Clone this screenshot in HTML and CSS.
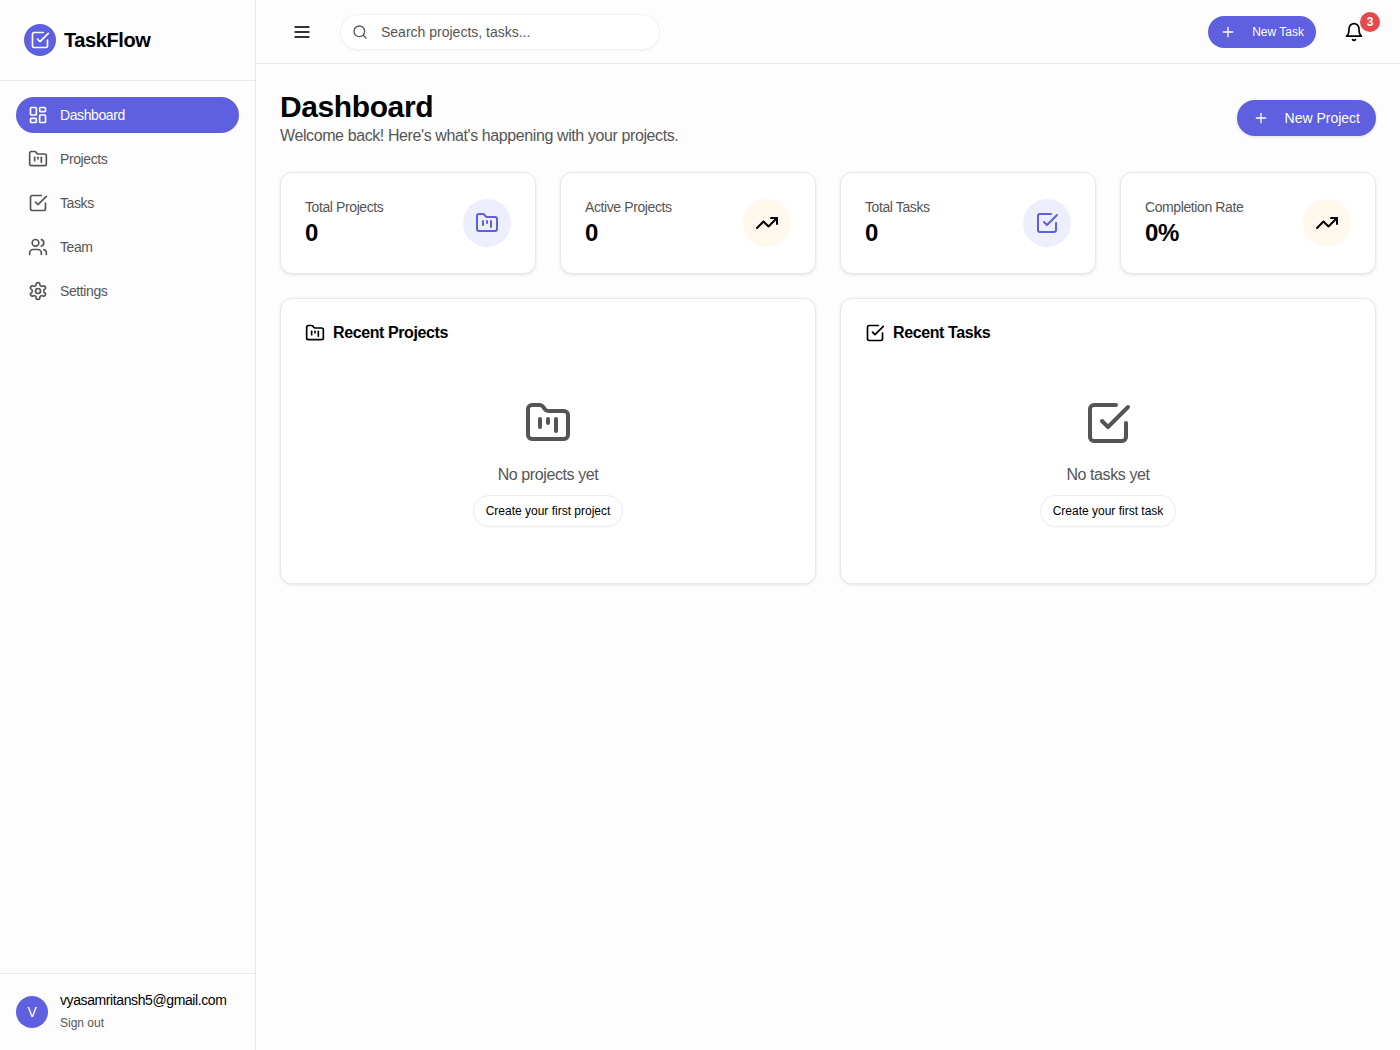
FILE: index.html
```html
<!DOCTYPE html>
<html lang="en">
<head>
  <meta charset="UTF-8"/>
  <title>TaskFlow - Dashboard</title>
  <link rel="stylesheet" href="styles.css">
</head>
<body>

  <!-- ICON SPRITE -->
  <svg class="sprite" xmlns="http://www.w3.org/2000/svg">
    <symbol id="i-dashboard" viewBox="0 0 24 24"><rect x="3" y="3" width="7" height="9" rx="1"/><rect x="14" y="3" width="7" height="5" rx="1"/><rect x="14" y="12" width="7" height="9" rx="1"/><rect x="3" y="16" width="7" height="5" rx="1"/></symbol>
    <symbol id="i-folder" viewBox="0 0 24 24"><path d="M4 20h16a2 2 0 0 0 2-2V8a2 2 0 0 0-2-2h-7.93a2 2 0 0 1-1.66-.9l-.82-1.2A2 2 0 0 0 7.93 3H4a2 2 0 0 0-2 2v13c0 1.1.9 2 2 2Z"/><path d="M8 10v4"/><path d="M12 10v2"/><path d="M16 10v6"/></symbol>
    <symbol id="i-check" viewBox="0 0 24 24"><polyline points="9 11 12 14 22 4"/><path d="M21 12v7a2 2 0 0 1-2 2H5a2 2 0 0 1-2-2V5a2 2 0 0 1 2-2h11"/></symbol>
    <symbol id="i-users" viewBox="0 0 24 24"><path d="M16 21v-2a4 4 0 0 0-4-4H6a4 4 0 0 0-4 4v2"/><circle cx="9" cy="7" r="4"/><path d="M22 21v-2a4 4 0 0 0-3-3.87"/><path d="M16 3.13a4 4 0 0 1 0 7.75"/></symbol>
    <symbol id="i-settings" viewBox="0 0 24 24"><path d="M12.22 2h-.44a2 2 0 0 0-2 2v.18a2 2 0 0 1-1 1.73l-.43.25a2 2 0 0 1-2 0l-.15-.08a2 2 0 0 0-2.73.73l-.22.38a2 2 0 0 0 .73 2.73l.15.1a2 2 0 0 1 1 1.72v.51a2 2 0 0 1-1 1.74l-.15.09a2 2 0 0 0-.73 2.73l.22.38a2 2 0 0 0 2.73.73l.15-.08a2 2 0 0 1 2 0l.43.25a2 2 0 0 1 1 1.73V20a2 2 0 0 0 2 2h.44a2 2 0 0 0 2-2v-.18a2 2 0 0 1 1-1.73l.43-.25a2 2 0 0 1 2 0l.15.08a2 2 0 0 0 2.73-.73l.22-.39a2 2 0 0 0-.73-2.73l-.15-.08a2 2 0 0 1-1-1.74v-.5a2 2 0 0 1 1-1.74l.15-.09a2 2 0 0 0 .73-2.73l-.22-.38a2 2 0 0 0-2.73-.73l-.15.08a2 2 0 0 1-2 0l-.43-.25a2 2 0 0 1-1-1.73V4a2 2 0 0 0-2-2z"/><circle cx="12" cy="12" r="3"/></symbol>
    <symbol id="i-trend" viewBox="0 0 24 24"><polyline points="22 7 13.5 15.5 8.5 10.5 2 17"/><polyline points="16 7 22 7 22 13"/></symbol>
    <symbol id="i-bell" viewBox="0 0 24 24"><path d="M6 8a6 6 0 0 1 12 0c0 7 3 9 3 9H3s3-2 3-9"/><path d="M10.3 21a1.94 1.94 0 0 0 3.4 0"/></symbol>
    <symbol id="i-search" viewBox="0 0 24 24"><circle cx="11" cy="11" r="8"/><path d="m21 21-4.3-4.3"/></symbol>
    <symbol id="i-menu" viewBox="0 0 24 24"><path d="M4 6h16"/><path d="M4 12h16"/><path d="M4 18h16"/></symbol>
    <symbol id="i-plus" viewBox="0 0 24 24"><path d="M5 12h14"/><path d="M12 5v14"/></symbol>
  </svg>

  <div class="app">

    <!-- SIDEBAR -->
    <aside class="sidebar">
      <div class="brand">
        <span class="brand-mark"><svg class="icon icon-20"><use href="#i-check"/></svg></span>
        <span class="brand-name">TaskFlow</span>
      </div>
      <nav class="nav">
        <a class="nav-item active" href="#"><svg class="icon icon-20"><use href="#i-dashboard"/></svg>Dashboard</a>
        <a class="nav-item" href="#"><svg class="icon icon-20"><use href="#i-folder"/></svg>Projects</a>
        <a class="nav-item" href="#"><svg class="icon icon-20"><use href="#i-check"/></svg>Tasks</a>
        <a class="nav-item" href="#"><svg class="icon icon-20"><use href="#i-users"/></svg>Team</a>
        <a class="nav-item" href="#"><svg class="icon icon-20"><use href="#i-settings"/></svg>Settings</a>
      </nav>
      <div class="account">
        <span class="avatar">V</span>
        <div class="account-text">
          <div class="account-email">vyasamritansh5@gmail.com</div>
          <a class="sign-out" href="#">Sign out</a>
        </div>
      </div>
    </aside>

    <div class="content">

      <!-- TOP BAR -->
      <header class="topbar">
        <button class="menu-btn"><svg class="icon icon-20"><use href="#i-menu"/></svg></button>
        <label class="search">
          <svg class="icon icon-16"><use href="#i-search"/></svg>
          <input type="text" placeholder="Search projects, tasks...">
        </label>
        <div class="topbar-actions">
          <button class="btn btn-small"><svg class="icon icon-16"><use href="#i-plus"/></svg>New Task</button>
          <button class="bell">
            <svg class="icon icon-20"><use href="#i-bell"/></svg>
            <span class="badge">3</span>
          </button>
        </div>
      </header>

      <!-- PAGE -->
      <main class="page">
        <div class="page-head">
          <div class="page-title">
            <h1>Dashboard</h1>
            <p>Welcome back! Here's what's happening with your projects.</p>
          </div>
          <button class="btn btn-large"><svg class="icon icon-16"><use href="#i-plus"/></svg>New Project</button>
        </div>

        <div class="stats">
          <div class="card stat">
            <div><div class="stat-label">Total Projects</div><div class="stat-value">0</div></div>
            <span class="stat-icon indigo"><svg class="icon icon-24"><use href="#i-folder"/></svg></span>
          </div>
          <div class="card stat">
            <div><div class="stat-label">Active Projects</div><div class="stat-value">0</div></div>
            <span class="stat-icon amber"><svg class="icon icon-24"><use href="#i-trend"/></svg></span>
          </div>
          <div class="card stat">
            <div><div class="stat-label">Total Tasks</div><div class="stat-value">0</div></div>
            <span class="stat-icon indigo"><svg class="icon icon-24"><use href="#i-check"/></svg></span>
          </div>
          <div class="card stat">
            <div><div class="stat-label">Completion Rate</div><div class="stat-value">0%</div></div>
            <span class="stat-icon amber"><svg class="icon icon-24"><use href="#i-trend"/></svg></span>
          </div>
        </div>

        <div class="panels">
          <section class="card panel">
            <h2><svg class="icon icon-20"><use href="#i-folder"/></svg>Recent Projects</h2>
            <div class="empty">
              <svg class="icon icon-48"><use href="#i-folder"/></svg>
              <p>No projects yet</p>
              <button class="btn-outline">Create your first project</button>
            </div>
          </section>
          <section class="card panel">
            <h2><svg class="icon icon-20"><use href="#i-check"/></svg>Recent Tasks</h2>
            <div class="empty">
              <svg class="icon icon-48"><use href="#i-check"/></svg>
              <p>No tasks yet</p>
              <button class="btn-outline">Create your first task</button>
            </div>
          </section>
        </div>
      </main>
    </div>
  </div>

</body>
</html>
```

FILE: styles.css
```css
/* GLOBAL STYLES */
* {
  margin: 0;
  padding: 0;
  box-sizing: border-box;
}
body {
  font-family: "Liberation Sans", Arial, sans-serif;
  color: #000;
  background: #fdfdfe;
  letter-spacing: -0.025em;
}
button, input {
  font-family: inherit;
  letter-spacing: inherit;
}
a {
  text-decoration: none;
  color: inherit;
}
.sprite {
  display: none;
}
.icon {
  display: block;
  flex: none;
  fill: none;
  stroke: currentColor;
  stroke-width: 2;
  stroke-linecap: round;
  stroke-linejoin: round;
}
.icon-16 { width: 16px; height: 16px; }
.icon-20 { width: 20px; height: 20px; }
.icon-24 { width: 24px; height: 24px; }
.icon-48 { width: 48px; height: 48px; }

.app {
  display: flex;
  height: 1050px;
}

/* SIDEBAR */
.sidebar {
  width: 256px;
  flex: none;
  display: flex;
  flex-direction: column;
  border-right: 1px solid #e8e8ec;
}
.brand {
  height: 81px;
  display: flex;
  align-items: center;
  gap: 8px;
  padding: 0 24px;
  border-bottom: 1px solid #e8e8ec;
}
.brand-mark {
  width: 32px;
  height: 32px;
  border-radius: 50%;
  background: #5e60e0;
  color: #fff;
  display: flex;
  align-items: center;
  justify-content: center;
}
.brand-name {
  font-size: 20px;
  font-weight: 700;
}
.nav {
  flex: 1;
  display: flex;
  flex-direction: column;
  gap: 8px;
  padding: 16px;
}
.nav-item {
  height: 36px;
  display: flex;
  align-items: center;
  gap: 12px;
  padding: 0 12px;
  border-radius: 18px;
  font-size: 14px;
  color: #555;
}
.nav-item.active {
  background: #5e60e0;
  color: #fff;
}
.account {
  height: 77px;
  display: flex;
  align-items: center;
  gap: 12px;
  padding: 0 16px;
  border-top: 1px solid #e8e8ec;
}
.avatar {
  width: 32px;
  height: 32px;
  border-radius: 50%;
  background: #5e60e0;
  color: #fff;
  font-size: 14px;
  display: flex;
  align-items: center;
  justify-content: center;
}
.account-text {
  padding-bottom: 2px;
}
.account-email {
  font-size: 14px;
  line-height: 20px;
}
.sign-out {
  display: block;
  margin-top: 4px;
  font-size: 12px;
  line-height: 18px;
  color: #555;
  letter-spacing: 0;
}

/* TOP BAR */
.content {
  flex: 1;
  min-width: 0;
}
.topbar {
  height: 64px;
  display: flex;
  align-items: center;
  padding: 0 24px 0 36px;
  border-bottom: 1px solid #e8e8ec;
}
.menu-btn {
  border: 0;
  background: none;
  color: #333;
  margin-right: 28px;
}
.menu-btn .icon {
  stroke-width: 2.4;
}
.search {
  width: 320px;
  height: 36px;
  display: flex;
  align-items: center;
  gap: 13px;
  padding: 0 11px;
  border: 1px solid #f1f1f4;
  border-radius: 18px;
  background: #fff;
  color: #555;
  box-shadow: 0 1px 2px rgba(0,0,0,0.03);
}
.search input {
  flex: 1;
  min-width: 0;
  border: 0;
  outline: 0;
  background: none;
  font-size: 14px;
  letter-spacing: 0;
}
.search input::placeholder {
  color: #555;
  opacity: 1;
}
.topbar-actions {
  margin-left: auto;
  display: flex;
  align-items: center;
  gap: 28px;
}
.btn {
  display: flex;
  align-items: center;
  border: 0;
  color: #fff;
  background: #5e60e0;
  letter-spacing: 0;
}
.btn-small {
  height: 32px;
  gap: 16px;
  padding: 0 12px;
  border-radius: 16px;
  font-size: 12px;
}
.btn-large {
  height: 36px;
  gap: 16px;
  padding: 0 16px;
  border-radius: 18px;
  font-size: 14px;
  box-shadow: 0 1px 3px rgba(0,0,0,0.12);
}
.bell {
  position: relative;
  border: 0;
  background: none;
  color: #000;
  margin-right: 12px;
}
.badge {
  position: absolute;
  top: -10px;
  right: -16px;
  width: 20px;
  height: 20px;
  border-radius: 50%;
  background: #e5484d;
  color: #fff;
  font-size: 12px;
  font-weight: 700;
  display: flex;
  align-items: center;
  justify-content: center;
}

/* PAGE */
.page {
  padding: 24px;
}
.page-head {
  display: flex;
  justify-content: space-between;
  align-items: center;
  margin-bottom: 24px;
}
.page-title {
  padding-top: 1px;
}
.page-title h1 {
  font-size: 30px;
  line-height: 36px;
}
.page-title p {
  margin-top: -1px;
  font-size: 16px;
  line-height: 24px;
  color: #555;
}

/* CARDS */
.card {
  background: #fff;
  border: 1px solid #e8e8ec;
  border-radius: 12px;
  box-shadow: 0 1px 3px rgba(0,0,0,0.1);
}
.stats {
  display: grid;
  grid-template-columns: repeat(4, 1fr);
  gap: 24px;
  margin-bottom: 24px;
}
.stat {
  height: 102px;
  display: flex;
  align-items: center;
  justify-content: space-between;
  padding: 0 24px;
}
.stat-label {
  font-size: 14px;
  line-height: 20px;
  color: #555;
}
.stat-value {
  font-size: 24px;
  line-height: 32px;
  font-weight: 700;
}
.stat-icon {
  width: 48px;
  height: 48px;
  border-radius: 50%;
  display: flex;
  align-items: center;
  justify-content: center;
}
.stat-icon.indigo {
  background: #eeeffc;
  color: #5e60e0;
}
.stat-icon.amber {
  background: #fef9ec;
  color: #000;
}
.panels {
  display: grid;
  grid-template-columns: 1fr 1fr;
  gap: 24px;
}
.panel {
  height: 286px;
  padding: 24px;
}
.panel h2 {
  display: flex;
  align-items: center;
  gap: 8px;
  font-size: 16px;
  line-height: 20px;
}
.empty {
  display: flex;
  flex-direction: column;
  align-items: center;
  padding-top: 56px;
  color: #555;
}
.empty p {
  margin-top: 16px;
  font-size: 16px;
  line-height: 24px;
}
.btn-outline {
  margin-top: 8px;
  height: 32px;
  padding: 0 12px;
  border: 1px solid #eeeef1;
  border-radius: 16px;
  background: #fff;
  color: #000;
  font-size: 12px;
  letter-spacing: 0;
  box-shadow: 0 1px 2px rgba(0,0,0,0.04);
}
```
